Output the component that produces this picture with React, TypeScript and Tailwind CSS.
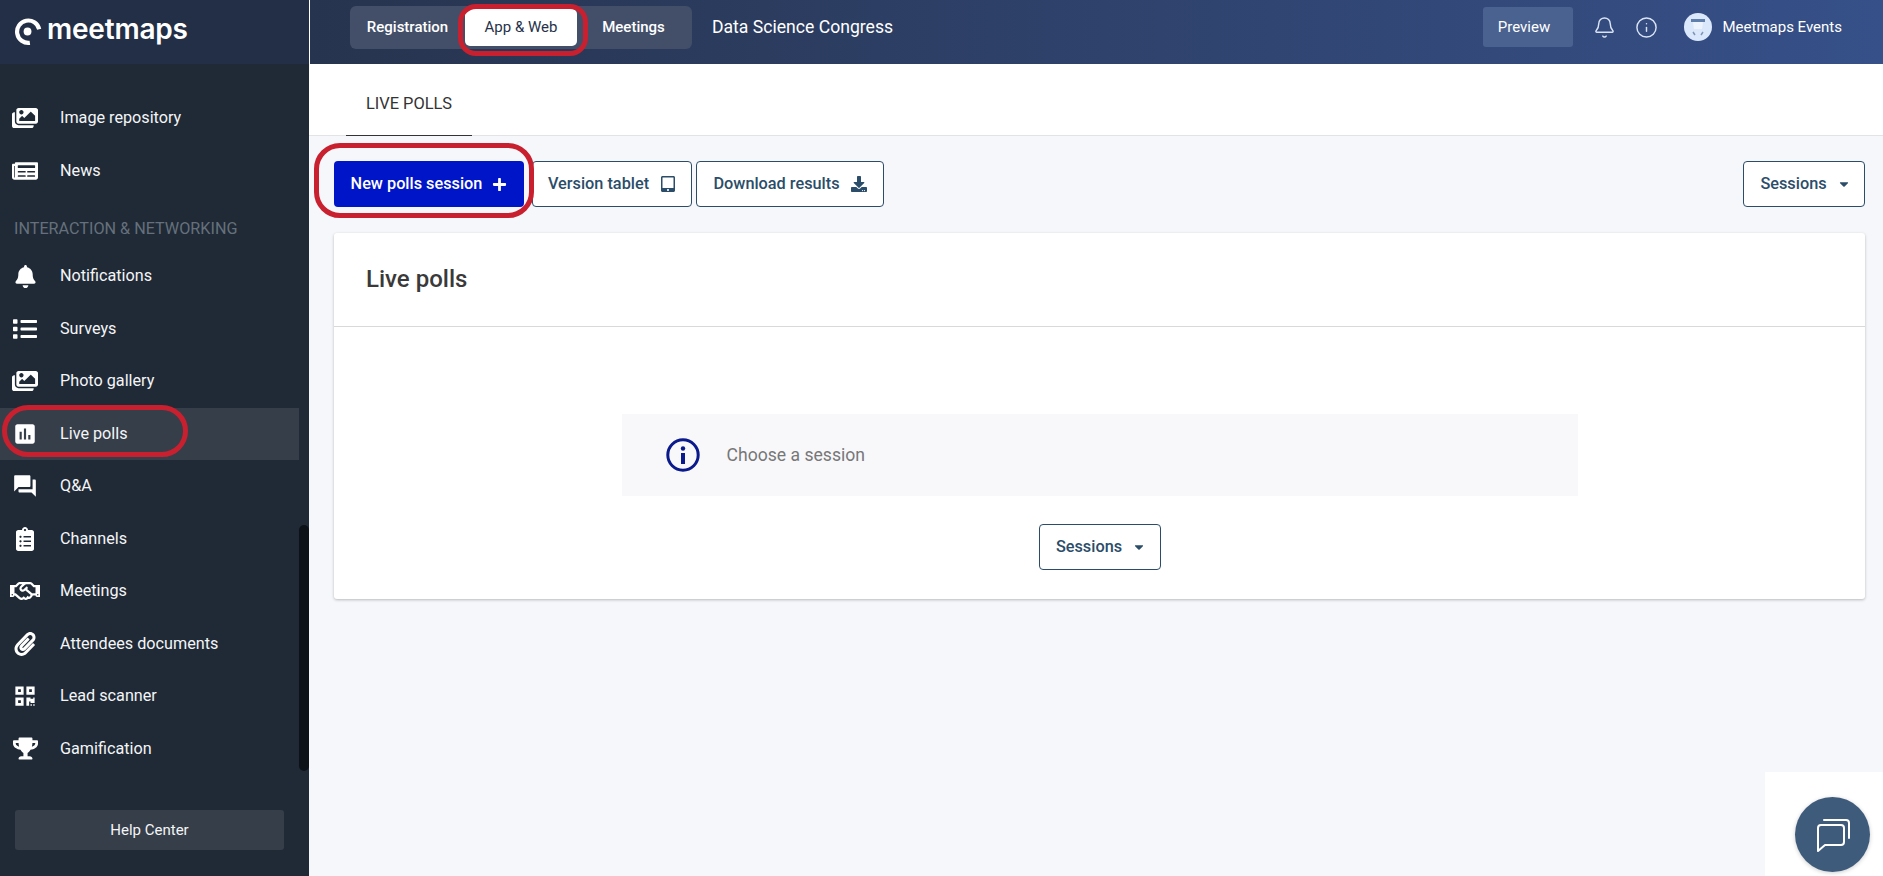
import { Bell, Info } from "lucide-react";
import type { ReactNode } from "react";
import {
  FaBell,
  FaCaretDown,
  FaClipboardList,
  FaDownload,
  FaImages,
  FaList,
  FaNewspaper,
  FaPaperclip,
  FaPlus,
  FaQrcode,
  FaRegHandshake,
  FaTabletAlt,
  FaTrophy,
} from "react-icons/fa";
import { MdPoll, MdQuestionAnswer } from "react-icons/md";

const beforeSection = [
  { label: "Image repository", icon: <FaImages className="h-[26px] w-[26px]" /> },
  { label: "News", icon: <FaNewspaper className="h-[26px] w-[26px]" /> },
];

const afterSection = [
  { label: "Notifications", icon: <FaBell className="h-[23px] w-[23px]" /> },
  { label: "Surveys", icon: <FaList className="h-[24px] w-[24px]" /> },
  { label: "Photo gallery", icon: <FaImages className="h-[26px] w-[26px]" /> },
  { label: "Live polls", icon: <MdPoll className="h-[26px] w-[26px]" />, active: true },
  { label: "Q&A", icon: <MdQuestionAnswer className="h-[26px] w-[26px]" /> },
  { label: "Channels", icon: <FaClipboardList className="h-[24px] w-[24px]" /> },
  { label: "Meetings", icon: <FaRegHandshake className="h-[30px] w-[30px]" /> },
  { label: "Attendees documents", icon: <FaPaperclip className="h-[24px] w-[24px]" /> },
  { label: "Lead scanner", icon: <FaQrcode className="h-[22px] w-[22px]" /> },
  { label: "Gamification", icon: <FaTrophy className="h-[25px] w-[25px]" /> },
];

function NavRow({ label, icon, active }: { label: string; icon: ReactNode; active?: boolean }) {
  return (
    <div className={`flex h-[52.5px] w-[299px] items-center text-white ${active ? "bg-[#363e4a]" : ""}`}>
      <span className="flex w-[60px] shrink-0 items-center justify-center pr-[10px]">{icon}</span>
      <span className="text-[16.2px] text-[#f4f5f6]">{label}</span>
    </div>
  );
}

function Ring({ className }: { className: string }) {
  return <div className={`pointer-events-none absolute z-10 border-[5px] border-[#c8202e] ${className}`} />;
}

function OutlineButton({ children, className }: { children: ReactNode; className?: string }) {
  return (
    <button
      className={`flex h-[46px] items-center justify-center rounded-[4px] border border-[#2b4d69] bg-white text-[16.3px] font-medium text-[#2b4d69] ${className ?? ""}`}
    >
      {children}
    </button>
  );
}

function SessionsButton({ className }: { className?: string }) {
  return (
    <OutlineButton className={`gap-[10px] pl-[3px] ${className ?? ""}`}>
      Sessions <FaCaretDown className="h-[14px] w-[14px]" />
    </OutlineButton>
  );
}

export default function App() {
  return (
    <div className="relative flex h-screen w-full overflow-hidden bg-[#f5f7fb] font-['Roboto',sans-serif]">
      <aside className="relative flex w-[309px] shrink-0 flex-col bg-[#1f2a36]">
        <div className="flex h-[64px] shrink-0 items-center gap-[5px] bg-[#232f46] pl-[14px] pb-[6px] text-white">
          <svg viewBox="0 0 30 30" className="mt-[6px] h-[28px] w-[28px]" fill="none">
            <path d="M27 12 A12 12 0 1 0 17 26.6" stroke="white" strokeWidth="4.5" strokeLinecap="butt" />
            <circle cx="14.5" cy="14.5" r="4.2" fill="white" />
          </svg>
          <span className="font-['Inter',sans-serif] text-[28px] leading-none font-semibold tracking-[-0.2px]">meetmaps</span>
        </div>
        <nav className="flex flex-1 flex-col pt-[28px]">
          {beforeSection.map((item) => (
            <NavRow key={item.label} {...item} />
          ))}
          <div className="flex h-[53px] items-center pt-[11px] pl-[14px] text-[16.2px] text-[#66707c]">INTERACTION &amp; NETWORKING</div>
          {afterSection.map((item) => (
            <NavRow key={item.label} {...item} />
          ))}
        </nav>
        <div className="shrink-0 px-[15px] pb-[26px]">
          <button className="h-[40px] w-[269px] rounded-[3px] bg-[#363e4a] text-[15px] text-[#f4f5f6]">Help Center</button>
        </div>
        <div className="absolute top-[525px] right-0 h-[246px] w-[10px] rounded-full bg-[#0c1218]" />
        <Ring className="top-[405px] left-[2px] h-[52px] w-[186px] rounded-[26px]" />
      </aside>

      <div className="flex min-w-0 flex-1 flex-col">
        <header className="flex h-[64px] shrink-0 items-center border-l border-white bg-gradient-to-r from-[#27344f] to-[#365089] pl-[40px] pr-[41px] pb-[10px] text-white">
          <div className="relative flex h-[43px] w-[342px] items-center rounded-[6px] bg-[#434f69] text-[15px] font-medium">
            <span className="w-[115px] text-center">Registration</span>
            <span className="flex h-[37px] w-[112px] items-center justify-center rounded-[5px] bg-white font-normal text-[#26324a]">App &amp; Web</span>
            <span className="flex-1 pr-[2px] text-center">Meetings</span>
            <Ring className="-top-[2px] left-[108px] h-[52px] w-[130px] rounded-[18px]" />
          </div>
          <span className="ml-[20px] text-[17.6px]">Data Science Congress</span>
          <button className="ml-auto h-[40px] w-[90px] rounded-[3px] bg-[#4a6290] pr-[9px] text-[15px]">Preview</button>
          <Bell className="ml-[20px] h-[23px] w-[23px] text-[#dbe4f5]" strokeWidth={1.5} />
          <Info className="ml-[19px] h-[23px] w-[23px] text-[#dbe4f5]" strokeWidth={1.5} />
          <svg viewBox="0 0 28 28" className="ml-[26px] h-[28px] w-[28px] rounded-full bg-[#dbe8fb]">
            <rect x="7" y="6" width="14" height="3" fill="#5f7fae" />
            <path d="M9 9h10l-1 7h-8z" fill="#eef4fd" />
            <path d="M9 19l2 3M19 19l-2 3" stroke="#7f95b5" strokeWidth="1.5" />
          </svg>
          <span className="ml-[10px] text-[15px]">Meetmaps Events</span>
        </header>

        <div className="flex h-[72px] shrink-0 border-b border-[#e2e3e6] bg-white pl-[37px]">
          <div className="-mb-px flex w-[126px] items-center justify-center border-b border-[#333] pt-[9px] text-[16.4px] text-[#333]">LIVE POLLS</div>
        </div>

        <div className="flex flex-1 flex-col pt-[25px] pr-[18px] pl-[25px]">
          <div className="flex items-center">
            <div className="relative">
              <button className="flex h-[46px] w-[190px] items-center justify-center gap-[10px] rounded-[4px] bg-[#0015c8] text-[16.3px] font-medium text-white">
                New polls session <FaPlus className="h-[15px] w-[15px]" />
              </button>
              <Ring className="-top-[18px] -left-[20px] h-[75px] w-[220px] rounded-[26px]" />
            </div>
            <OutlineButton className="ml-[8px] w-[160px] gap-[11px]">
              Version tablet <FaTabletAlt className="h-[16px] w-[16px]" />
            </OutlineButton>
            <OutlineButton className="ml-[4px] w-[188px] gap-[11px]">
              Download results <FaDownload className="h-[16px] w-[16px]" />
            </OutlineButton>
            <SessionsButton className="ml-auto w-[122px]" />
          </div>

          <section className="mt-[26px] rounded-[3px] bg-white shadow-[0_1px_3px_rgba(0,0,0,0.25)]">
            <div className="flex h-[94px] items-center border-b border-[#d9d9d9] pb-[2px] pl-[32px] text-[24px] font-medium text-[#3a3a3a]">Live polls</div>
            <div className="flex flex-col items-center pt-[87px] pb-[29px]">
              <div className="flex h-[82px] w-[956px] items-center bg-[#f8f8fb] pl-[44px]">
                <svg viewBox="0 0 34 34" className="h-[34px] w-[34px]" fill="none">
                  <circle cx="17" cy="17" r="15.2" stroke="#0a1a8c" strokeWidth="3" />
                  <circle cx="17" cy="10.5" r="2.2" fill="#0a1a8c" />
                  <rect x="15" y="15" width="4" height="11" fill="#0a1a8c" />
                </svg>
                <span className="ml-[27px] text-[17.6px] text-[#777]">Choose a session</span>
              </div>
              <SessionsButton className="mt-[28px] w-[122px]" />
            </div>
          </section>
        </div>
      </div>

      <div className="absolute right-0 bottom-0 flex h-[104px] w-[118px] bg-white">
        <button className="absolute top-[25px] left-[30px] flex h-[75px] w-[75px] items-center justify-center rounded-full bg-[#3f5b7b] shadow-[0_1px_4px_rgba(0,0,0,0.2)]">
          <svg viewBox="0 0 36 36" className="h-[36px] w-[36px]" fill="none" stroke="white" strokeWidth="2" strokeLinejoin="round" strokeLinecap="round">
            <path d="M3 11a3 3 0 0 1 3-3h20a3 3 0 0 1 3 3v14a3 3 0 0 1-3 3H10l-7 6z" />
            <path d="M9 3h22a3 3 0 0 1 3 3v15" />
          </svg>
        </button>
      </div>
    </div>
  );
}
